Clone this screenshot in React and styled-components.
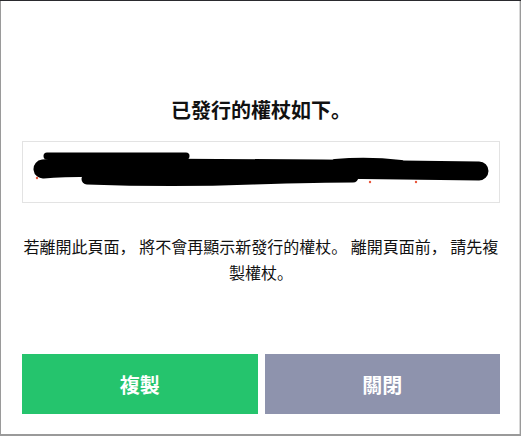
import React from "react";
import styled, { createGlobalStyle } from "styled-components";

const GlobalStyle = createGlobalStyle`
  html, body {
    margin: 0;
    padding: 0;
    background: #8a8a8a;
  }
  body {
    font-family: "Noto Sans CJK JP", "Noto Sans CJK TC", "Liberation Sans", sans-serif;
  }
`;

const Screen = styled.div`
  width: 521px;
  height: 436px;
  box-sizing: border-box;
  border-top: 1px solid #2a2a2e;
  padding-left: 1px;
  display: flex;
  align-items: flex-start;
  background: #9a9a9a;
`;

const Modal = styled.div`
  width: 519px;
  height: 433px;
  box-sizing: border-box;
  background: #fff;
  border-right: 1px solid #d8d8d8;
  padding: 94px 19px 20px 21px;
  display: flex;
  flex-direction: column;
  color: #111;
`;

const Title = styled.h2`
  margin: 0;
  font-size: 20px;
  line-height: 30px;
  font-weight: 700;
  text-align: center;
`;

const TokenBox = styled.div`
  margin-top: 16px;
  height: 62px;
  box-sizing: border-box;
  border: 1px solid #e3e3e3;
  display: flex;
`;

const Notice = styled.p`
  margin: 30px 0 0;
  font-size: 16px;
  line-height: 26px;
  text-align: center;
`;

const Actions = styled.div`
  margin-top: 69px;
  display: grid;
  grid-template-columns: 1fr 1fr;
  gap: 7px;
`;

const Button = styled.button`
  height: 60px;
  border: none;
  border-radius: 0;
  background: ${(p) => (p.$variant === "primary" ? "#25c46d" : "#8e93ad")};
  color: #fff;
  font-family: inherit;
  font-size: 20px;
  font-weight: 700;
  cursor: pointer;
`;

// hand-drawn marker strokes hiding the token
const Redaction = () => (
  <svg width="476" height="60" viewBox="0 0 476 60" aria-hidden="true">
    <g stroke="#000" strokeLinecap="round" fill="none">
      <path d="M24 14 L163 14" strokeWidth="7" />
      <path d="M312 20 Q345 17 378 21" strokeWidth="6" />
      <path d="M20 27 Q50 24 120 26 L300 27 L456 29" strokeWidth="19" />
      <path d="M64 37 Q150 40 230 37 Q300 35 330 35" strokeWidth="11" />
    </g>
    <circle cx="14" cy="36" r="1.2" fill="#e8553a" />
    <circle cx="347" cy="40" r="1.2" fill="#e8553a" />
    <circle cx="393" cy="40" r="1.2" fill="#e8553a" />
  </svg>
);

export default function App() {
  return (
    <>
      <GlobalStyle />
      <Screen>
        <Modal>
          <Title>已發行的權杖如下。</Title>
          <TokenBox>
            <Redaction />
          </TokenBox>
          <Notice>
            若離開此頁面， 將不會再顯示新發行的權杖。 離開頁面前， 請先複製權杖。
          </Notice>
          <Actions>
            <Button $variant="primary">複製</Button>
            <Button>關閉</Button>
          </Actions>
        </Modal>
      </Screen>
    </>
  );
}
